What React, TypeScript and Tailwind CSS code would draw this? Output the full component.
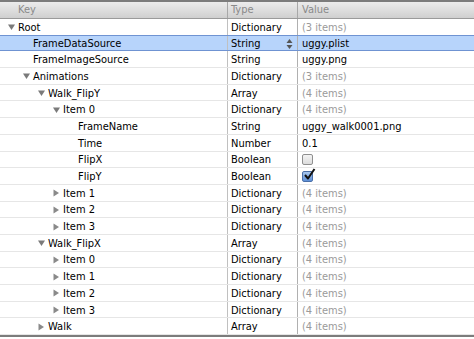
import React from 'react';

type Row = {
  key: string;
  level: number;
  toggle?: 'open' | 'closed';
  type: string;
  value: string;
  muted?: boolean;
  selected?: boolean;
  check?: boolean;
};

const rows: Row[] = [
  { key: 'Root', level: 0, toggle: 'open', type: 'Dictionary', value: '(3 items)', muted: true },
  { key: 'FrameDataSource', level: 1, type: 'String', value: 'uggy.plist', selected: true },
  { key: 'FrameImageSource', level: 1, type: 'String', value: 'uggy.png' },
  { key: 'Animations', level: 1, toggle: 'open', type: 'Dictionary', value: '(3 items)', muted: true },
  { key: 'Walk_FlipY', level: 2, toggle: 'open', type: 'Array', value: '(4 items)', muted: true },
  { key: 'Item 0', level: 3, toggle: 'open', type: 'Dictionary', value: '(4 items)', muted: true },
  { key: 'FrameName', level: 4, type: 'String', value: 'uggy_walk0001.png' },
  { key: 'Time', level: 4, type: 'Number', value: '0.1' },
  { key: 'FlipX', level: 4, type: 'Boolean', value: '', check: false },
  { key: 'FlipY', level: 4, type: 'Boolean', value: '', check: true },
  { key: 'Item 1', level: 3, toggle: 'closed', type: 'Dictionary', value: '(4 items)', muted: true },
  { key: 'Item 2', level: 3, toggle: 'closed', type: 'Dictionary', value: '(4 items)', muted: true },
  { key: 'Item 3', level: 3, toggle: 'closed', type: 'Dictionary', value: '(4 items)', muted: true },
  { key: 'Walk_FlipX', level: 2, toggle: 'open', type: 'Array', value: '(4 items)', muted: true },
  { key: 'Item 0', level: 3, toggle: 'closed', type: 'Dictionary', value: '(4 items)', muted: true },
  { key: 'Item 1', level: 3, toggle: 'closed', type: 'Dictionary', value: '(4 items)', muted: true },
  { key: 'Item 2', level: 3, toggle: 'closed', type: 'Dictionary', value: '(4 items)', muted: true },
  { key: 'Item 3', level: 3, toggle: 'closed', type: 'Dictionary', value: '(4 items)', muted: true },
  { key: 'Walk', level: 2, toggle: 'closed', type: 'Array', value: '(4 items)', muted: true },
];

function Disclosure({ open }: { open: boolean }) {
  return open ? (
    <svg width="7" height="6" viewBox="0 0 7 6" className="shrink-0">
      <path d="M0 0.5 L7 0.5 L3.5 6 Z" fill="#7a7a7a" />
    </svg>
  ) : (
    <svg width="6" height="8" viewBox="0 0 6 8" className="shrink-0">
      <path d="M0.5 0.5 L6 4 L0.5 7.5 Z" fill="#8a8a8a" />
    </svg>
  );
}

function Checkbox({ checked }: { checked: boolean }) {
  return (
    <div
      className={`relative w-[11px] h-[11px] rounded-[2px] border ${
        checked ? 'border-[#4a6fa8] bg-gradient-to-b from-[#a9c8ef] to-[#5d8fd6]' : 'border-[#8f8f8f] bg-gradient-to-b from-[#f4f4f4] to-[#dcdcdc]'
      }`}
    >
      {checked && (
        <svg width="13" height="13" viewBox="0 0 13 13" className="absolute -top-[4px] left-[0px]">
          <path d="M2 7 L5 10.5 L11.5 1" stroke="#111" strokeWidth="2" fill="none" strokeLinejoin="round" />
        </svg>
      )}
    </div>
  );
}

function Stepper() {
  return (
    <svg width="7" height="12" viewBox="0 0 7 12" className="shrink-0">
      <path d="M3.5 1 L6.5 5 L0.5 5 Z" fill="#555" />
      <path d="M3.5 11 L6.5 7 L0.5 7 Z" fill="#555" />
    </svg>
  );
}

export default function App() {
  return (
    <div
      className="w-[474px] h-[339px] overflow-hidden bg-white flex flex-col text-[11px] text-black"
      style={{ fontFamily: '"DejaVu Sans Condensed", "DejaVu Sans", "Liberation Sans", sans-serif' }}
    >
      {/* Header */}
      <div className="h-[19px] shrink-0 flex border-t-2 border-t-[#7c7c7c] border-b border-b-[#9a9a9a] bg-gradient-to-b from-[#ececec] via-[#dedede] to-[#cfcfcf] text-[#8a8a8a]">
        <div className="w-[228px] shrink-0 border-r border-[#a8a8a8] pl-[18px] flex items-center">Key</div>
        <div className="w-[70px] shrink-0 border-r border-[#a8a8a8] pl-[3px] flex items-center">Type</div>
        <div className="flex-1 pl-[4px] flex items-center">Value</div>
      </div>

      {/* Rows */}
      <div className="flex flex-col">
        {rows.map((r, i) => (
          <div
            key={i}
            className={`h-[16.7px] shrink-0 flex items-stretch border-b ${
              r.selected ? 'bg-[#b7d4fb] border-b-[#6f93d2] border-t border-t-[#6f93d2] -mt-px' : 'border-b-[#e6e6e6]'
            }`}
          >
            <div className="w-[228px] shrink-0 border-r border-[#c0c0c0] flex items-center pt-px">
              <div className="flex items-center" style={{ paddingLeft: 8 + r.level * 15 }}>
                <div className="w-[10px] flex items-center">{r.toggle && <Disclosure open={r.toggle === 'open'} />}</div>
                <span className="leading-none">{r.key}</span>
              </div>
            </div>
            <div className="w-[70px] shrink-0 border-r border-[#b0b0b0] pl-[3px] pr-[4px] flex items-center justify-between pt-px">
              <span className="leading-none">{r.type}</span>
              {r.selected && <Stepper />}
            </div>
            <div className="flex-1 pl-[4px] flex items-center pt-px">
              {r.check !== undefined ? (
                <Checkbox checked={r.check} />
              ) : (
                <span className={`leading-none ${r.muted ? 'text-[#9a9a9a]' : ''}`}>{r.value}</span>
              )}
            </div>
          </div>
        ))}
      </div>
      <div className="flex-1 border-t-2 border-[#7c7c7c]" />
    </div>
  );
}
